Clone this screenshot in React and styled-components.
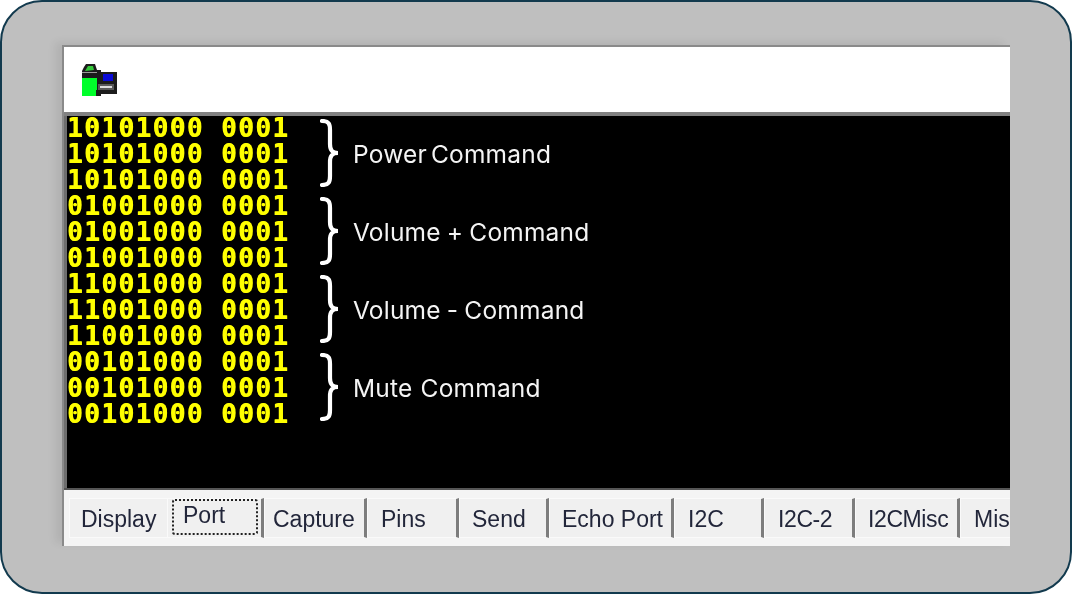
import React from 'react';
import styled, { createGlobalStyle } from 'styled-components';

const Global = createGlobalStyle`
  html, body { margin: 0; padding: 0; background: #fff; overflow: hidden; }
  * { box-sizing: border-box; }
`;
const Frame = styled.div`
  width: 1072px; height: 594px; background: #bfbfbf;
  border: 2px solid #123a4e; border-radius: 42px;
  padding: 43px 60px 46px 60px;
`;
const Win = styled.div`
  width: 948px; height: 501px; display: flex; flex-direction: column;
  border-left: 2px solid #8a8a8a; border-top: 2px solid #8a8a8a;
  box-shadow: -7px -3px 8px rgba(0,0,0,.07);
  overflow: hidden;
`;
const Toolbar = styled.div`
  height: 69px; flex: none; background: #fff; display: flex; align-items: center;
  padding: 0 0 0 17px; border-bottom: 4px solid; border-image: linear-gradient(#dcdcdc, #808080) 1;
  filter: blur(0.5px);
`;
const Console = styled.div`
  height: 372px; flex: none; background: #000; border-left: 3px solid #6e6e6e;
  display: flex; flex-direction: column;
`;
const Group = styled.div`
  display: flex; align-items: center; height: 78px; flex: none; padding-bottom: 4px;
  filter: blur(0.4px);
`;
const Lines = styled.div`
  width: 253px; flex: none; align-self: flex-start; height: 78px; margin-top: -1px;
`;
const Line = styled.div`
  height: 26px; line-height: 26px; white-space: pre;
  font-family: "DejaVu Sans Mono", monospace; font-weight: 700; font-size: 26px;
  letter-spacing: 1.45px; color: #ffff00; text-shadow: 0.6px 0 0 #ffff00;
`;
const Label = styled.span`
  margin: 2px 0 0 13px; color: #f4f4f4; font-family: Inter, "Open Sans", sans-serif;
  font-size: 24.5px; letter-spacing: 0.2px; word-spacing: ${p => p.$ws}px; white-space: pre;
`;
const Strip = styled.div`
  flex: 1; background: #f4f4f4; border-top: 2px solid #555; display: flex;
  align-items: flex-start; padding: 8px 0 0 5px; overflow: hidden;
`;
const Tab = styled.div`
  width: ${p => p.$w}px; height: 40px; flex: none; background: #f0f0f0;
  border: 1px solid #fafafa;
  border-right: ${p => p.$sep ? '3px solid #7d7d7d' : '0 solid transparent'};
  padding: ${p => p.$active ? '2px' : '6px'} 0 0 ${p => p.$pad}px;
  font-family: "Liberation Sans", Arial, sans-serif; font-size: 23px; line-height: 28px; color: #22263a;
  letter-spacing: ${p => p.$ls}px;
  white-space: nowrap; overflow: hidden; filter: blur(0.35px);
`;
const Focus = styled.div`
  height: 36px; margin: -2px 0 0 -7px; padding-left: 9px;
  width: 86px; border: 2px dotted #222; border-radius: 3px; line-height: 28px;
`;

const groups = [
  ['10101000 0001', 'Power Command', -3],
  ['01001000 0001', 'Volume + Command', -1],
  ['11001000 0001', 'Volume - Command', -1],
  ['00101000 0001', 'Mute Command', 1],
];
const tabs = [
  ['Display', 98, 11, false, false, 0], ['Port', 97, 11, true, true, 0], ['Capture', 103, 8, true, false, 0],
  ['Pins', 92, 13, true, false, 0], ['Send', 90, 12, true, false, 0], ['Echo Port', 125, 12, true, false, 0],
  ['I2C', 90, 13, true, false, 0], ['I2C-2', 91, 13, true, false, -0.4], ['I2CMisc', 105, 12, true, false, -0.4], ['Misc', 60, 13, false, false, 0],
];

function Brace() {
  return (
    <svg width="20" height="68" viewBox="0 0 20 68" fill="none" stroke="#fff" strokeWidth="4.2" strokeLinecap="round">
      <path d="M2 2 C9 2 10 5 10 11 L10 25 C10 31 12 34 18 34 C12 34 10 37 10 43 L10 57 C10 63 9 66 2 66" />
    </svg>
  );
}
function AppIcon() {
  return (
    <svg width="36" height="34" viewBox="0 0 36 34">
      <path d="M3 4 L5 1 H14 L16 7 H20 V15 H1 V8 Z" fill="#1c1c1c" />
      <path d="M4 8 L7 3 H12 L13 7 Z" fill="#35c83a" />
      <rect x="1" y="9" width="15" height="1" fill="#9a9a9a" />
      <rect x="1" y="15" width="15" height="18" fill="#00ff2a" />
      <rect x="16" y="9" width="20" height="22" fill="#1c1c1c" />
      <rect x="22" y="11" width="10" height="7" fill="#0a0ad8" />
      <rect x="17" y="21" width="16" height="6" fill="#5a5a5a" />
      <rect x="19" y="23" width="12" height="2" fill="#dcdcdc" />
      <rect x="15" y="27" width="5" height="6" fill="#1c1c1c" />
    </svg>
  );
}

export default function App() {
  return (
    <>
      <Global />
      <Frame>
        <Win>
          <Toolbar><AppIcon /></Toolbar>
          <Console>
            {groups.map(([code, label, ws]) => (
              <Group key={code}>
                <Lines>{[0, 1, 2].map(i => <Line key={i}>{code}</Line>)}</Lines>
                <Brace />
                <Label $ws={ws}>{label}</Label>
              </Group>
            ))}
          </Console>
          <Strip>
            {tabs.map(([t, w, pad, sep, active, ls]) => (
              <Tab key={t} $w={w} $pad={pad} $sep={sep} $active={active} $ls={ls}>
                {active ? <Focus>{t}</Focus> : t}
              </Tab>
            ))}
          </Strip>
        </Win>
      </Frame>
    </>
  );
}
